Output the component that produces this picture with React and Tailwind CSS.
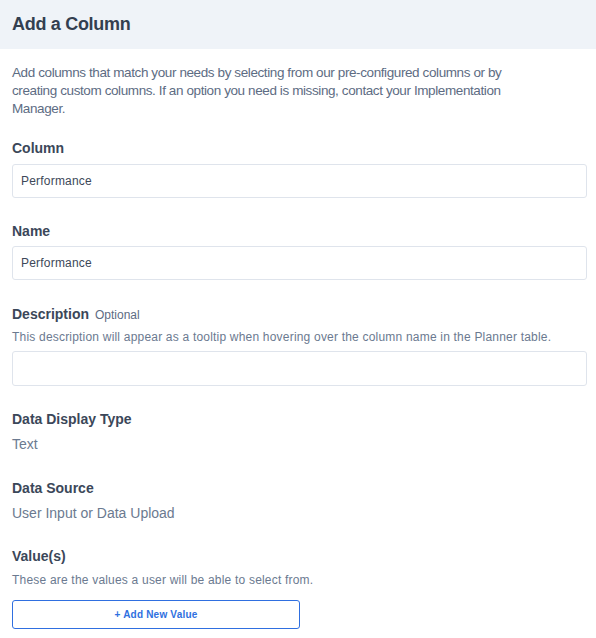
import React from "react";

const Label = ({ children, className = "" }) => (
  <div className={`text-[14px] leading-[18px] font-semibold text-[#3b4759] ${className}`}>{children}</div>
);

const Field = ({ value }) => (
  <div className="h-[34px] border border-[#dfe4ec] rounded-[3px] flex items-center px-2 text-[12px] tracking-[0.2px] text-[#3d4859]">
    {value}
  </div>
);

export default function App() {
  return (
    <div className="w-[596px] min-h-[638px] bg-white font-['Liberation_Sans',sans-serif]">
      {/* Header */}
      <div className="h-[49px] bg-[#eff3f8] flex items-center px-3">
        <h1 className="text-[18px] font-semibold tracking-[-0.3px] text-[#333f50]">Add a Column</h1>
      </div>

      <div className="pl-3 pr-[9px] pt-[15px]">
        <p className="text-[13.5px] tracking-[-0.4px] leading-[18px] text-[#5d6c83] pr-[80px]">
          Add columns that match your needs by selecting from our pre-configured columns or by
          creating custom columns. If an option you need is missing, contact your Implementation
          Manager.
        </p>

        <Label className="mt-[21px]">Column</Label>
        <div className="mt-[7px]">
          <Field value="Performance" />
        </div>

        <Label className="mt-[24px]">Name</Label>
        <div className="mt-[6px]">
          <Field value="Performance" />
        </div>

        <div className="mt-[25px] flex items-baseline gap-[6px]">
          <span className="text-[14px] leading-[18px] font-semibold text-[#3b4759]">Description</span>
          <span className="text-[12px] text-[#5d6c83]">Optional</span>
        </div>
        <p className="mt-[5px] text-[12px] tracking-[0.2px] leading-[16px] text-[#6b7a90]">
          This description will appear as a tooltip when hovering over the column name in the Planner table.
        </p>
        <div className="mt-[6px] h-[35px] border border-[#dfe4ec] rounded-[3px]" />

        {/* Read-only details */}
        <Label className="mt-[24px]">Data Display Type</Label>
        <div className="mt-[7px] text-[14px] leading-[18px] text-[#6b7a90]">Text</div>

        <Label className="mt-[26px]">Data Source</Label>
        <div className="mt-[7px] text-[14px] leading-[18px] text-[#6b7a90]">User Input or Data Upload</div>

        <Label className="mt-[25px]">Value(s)</Label>
        <p className="mt-[7px] text-[12px] tracking-[0.2px] leading-[16px] text-[#6b7a90]">
          These are the values a user will be able to select from.
        </p>
        <button className="mt-[12px] w-[288px] h-[29px] border border-[#2f6fe0] rounded-[3px] text-[10px] font-semibold tracking-[0.2px] text-[#2f6fe0]">
          + Add New Value
        </button>
      </div>
    </div>
  );
}
